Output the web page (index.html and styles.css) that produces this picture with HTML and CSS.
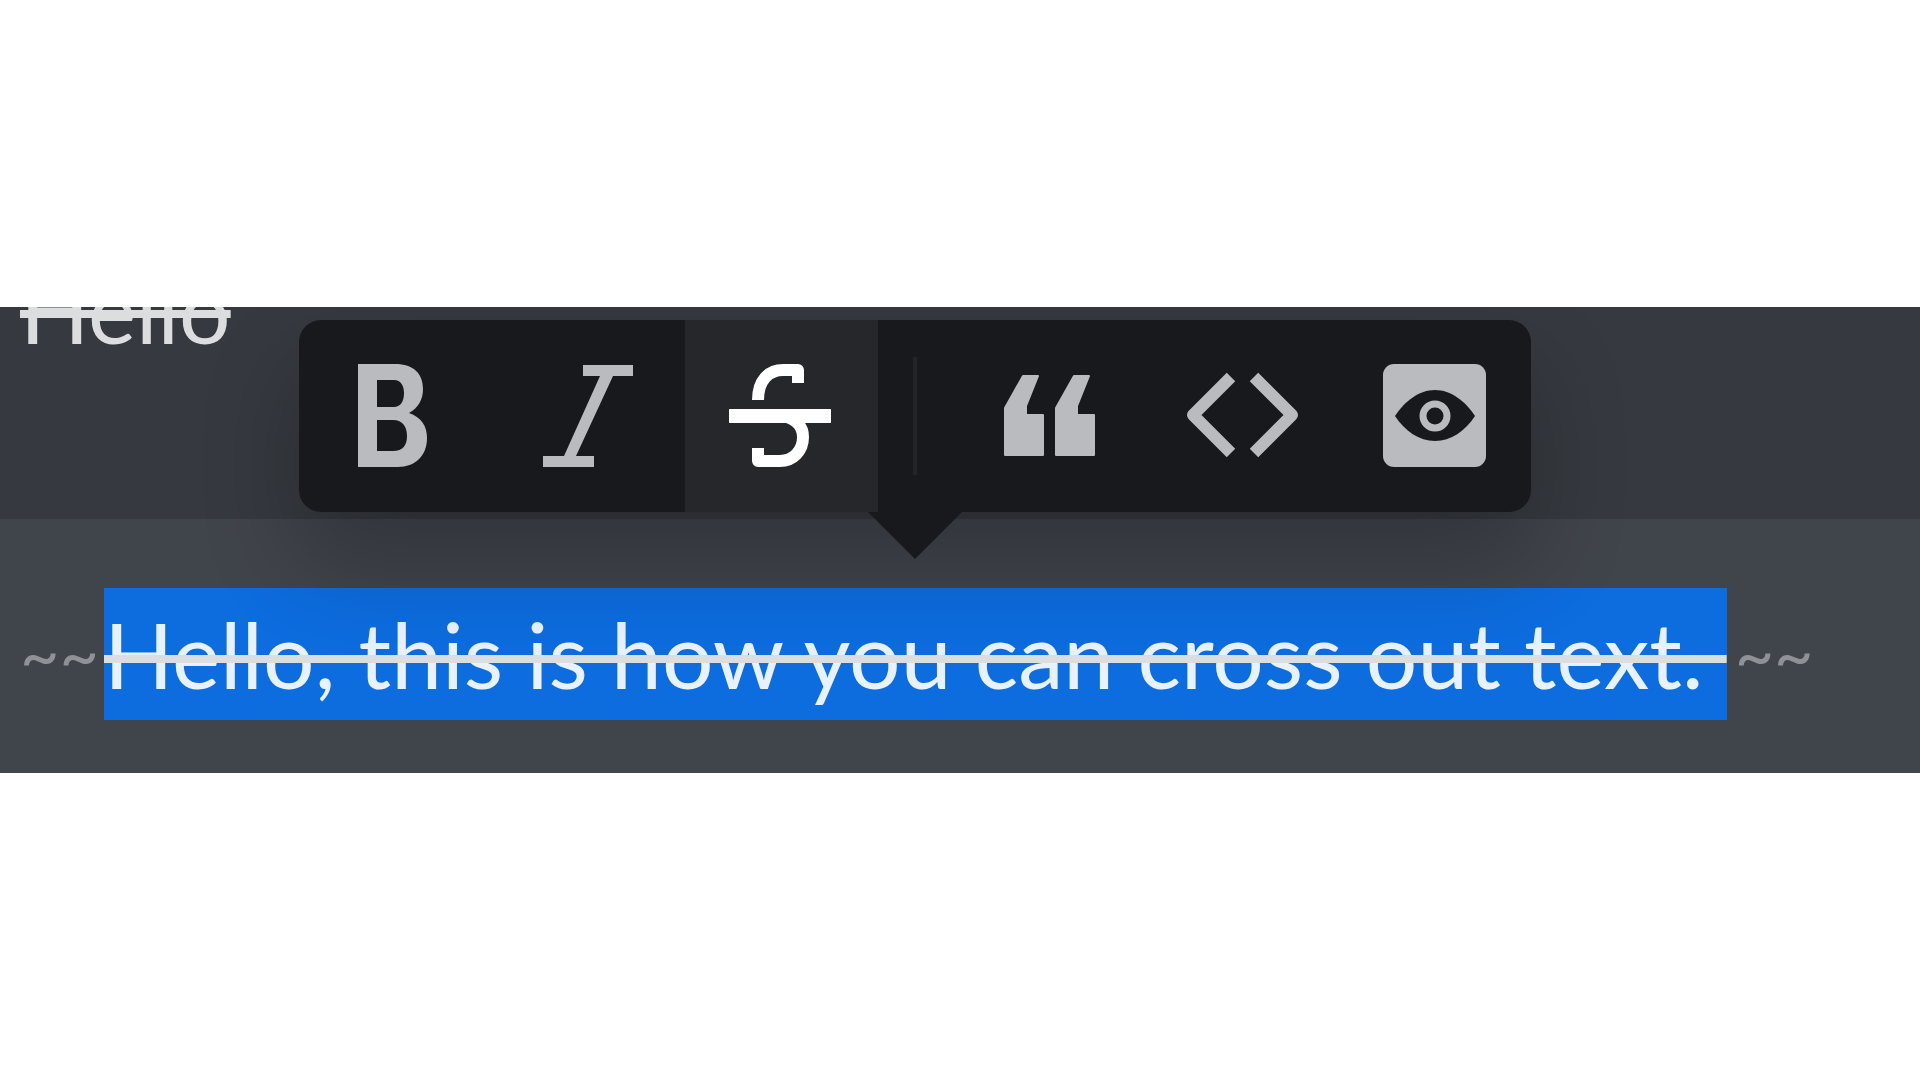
FILE: index.html
```
<!DOCTYPE html>
<html lang="en">
<head>
  <meta charset="UTF-8" />
  <meta name="viewport" content="width=device-width, initial-scale=1.0"/>
  <title>Text Formatting</title>
  <link rel="stylesheet" href="styles.css">
</head>
<body>
  <main class="chat">
    <div class="messages">
      <p class="message"><s>Hello</s></p>
    </div>

    <div class="composer">
      <span class="mark">~~</span>
      <div class="selection">
        <s>Hello, this is how you can cross out text. </s>

        <div class="toolbar" role="toolbar" aria-label="Formatting">
          <button type="button" aria-label="Bold">
            <svg viewBox="0 0 192 192"><path fill="currentColor" fill-rule="evenodd" d="M59 44H96C115 44 124 54 124 69C124 80 119 88 110 93C122 97 128 106 128 118C128 136 116 147 99 147H59ZM78 60V87H95C101 87 105 82 105 73C105 66 102 60 95 60ZM78 100V131H94C104 131 108 125 108 116C108 107 104 100 94 100Z"/></svg>
          </button>
          <button type="button" aria-label="Italic">
            <svg viewBox="0 0 192 192"><path fill="currentColor" d="M91 45H141V56H121L84 136H102V147H51V136H72L108 56H91Z"/></svg>
          </button>
          <button type="button" class="active" aria-label="Strikethrough" aria-pressed="true">
            <svg viewBox="0 0 192 192"><path fill="currentColor" d="M44 89H146V103H44Z"/><path fill="none" stroke="currentColor" stroke-width="12" stroke-linejoin="round" d="M73 80C73 60 84 50 98 50H113V63M98 96C112 99 118 107 118 117C118 131 108 141 95 141H73V128"/></svg>
          </button>
          <span class="divider"></span>
          <button type="button" aria-label="Quote">
            <svg viewBox="0 0 192 192"><path fill="currentColor" stroke="currentColor" stroke-width="2" stroke-linejoin="round" d="M71 56H86L74 86V95H91V135H53V88ZM122 56H137L125 86V95H142V135H104V88Z"/></svg>
          </button>
          <button type="button" aria-label="Code">
            <svg viewBox="0 0 192 192"><path fill="none" stroke="currentColor" stroke-width="12" stroke-linejoin="round" d="M86 57L48 95L86 133M109 57L147 95L109 133"/></svg>
          </button>
          <button type="button" aria-label="Spoiler">
            <svg viewBox="0 0 192 192"><rect x="45" y="44" width="103" height="103" rx="11" fill="currentColor"/><path class="eye" d="M57 96C67 81 81 70 97 70C113 70 127 81 137 96C127 111 113 121 97 121C81 121 67 111 57 96Z"/><circle cx="97" cy="96" r="12" fill="none" stroke="currentColor" stroke-width="7"/></svg>
          </button>
        </div>
      </div>
      <span class="mark">~~</span>
    </div>
  </main>
</body>
</html>
```
FILE: styles.css
```
:root {
  --bg: #36393f;
  --input: #40444b;
  --toolbar: #18191c;
  --active: #26272b;
  --icon: #b9bbbe;
  --text: #dcddde;
  --select: #0d6cde;
}

body {
  margin: 0;
  min-height: 100vh;
  display: flex;
  align-items: center;
  background: #fff;
  font-family: Lato, 'Open Sans', sans-serif;
  color: var(--text);
}

.chat {
  width: 100%;
  overflow: hidden;
  font-size: 91px;
  line-height: 132px;
}

.messages {
  height: 212px;
  display: flex;
  align-items: flex-start;
  padding-left: 20px;
  background: var(--bg);
}

.message {
  margin: -64px 0 0;
}

s {
  white-space: pre;
  text-decoration-thickness: 8px;
}

.composer {
  display: flex;
  align-items: center;
  gap: 8px;
  padding: 69px 20px 53px;
  background: var(--input);
}

.mark {
  width: 76px;
  font-size: 68px;
  color: #8e9297;
}

.selection {
  position: relative;
  background: var(--select);
}

.selection s {
  color: #e8f2ff;
  text-decoration-color: var(--text);
}

/* floats above the selected text */
.toolbar {
  position: absolute;
  left: 50%;
  bottom: 100%;
  transform: translateX(-50%);
  margin-bottom: 76px;
  display: flex;
  align-items: center;
  background: var(--toolbar);
  border-radius: 22px;
  box-shadow: 0 48px 96px rgba(0, 0, 0, 0.24);
}

.toolbar::after {
  content: '';
  position: absolute;
  left: 50%;
  top: 100%;
  transform: translateX(-50%);
  border: 47px solid transparent;
  border-top-color: var(--toolbar);
  border-bottom: 0;
}

button {
  width: 193px;
  height: 192px;
  padding: 0;
  border: none;
  background: none;
  color: var(--icon);
  cursor: pointer;
}

button.active {
  background: var(--active);
  color: #fff;
}

button svg {
  display: block;
  width: 192px;
  height: 192px;
}

.eye {
  fill: var(--toolbar);
}

.divider {
  width: 4px;
  height: 118px;
  margin: 0 35px;
  background: #232428;
}
```
